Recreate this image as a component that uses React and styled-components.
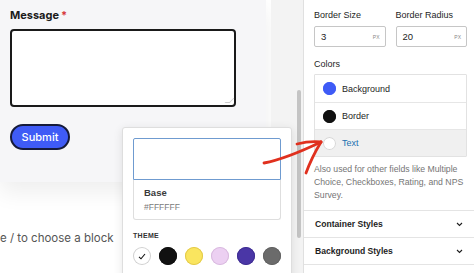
import React from "react";
import styled, { createGlobalStyle } from "styled-components";

const GlobalStyle = createGlobalStyle`
  html, body { margin: 0; padding: 0; background: #fff; }
  body { font-family: "Liberation Sans", Arial, sans-serif; }
  * { box-sizing: border-box; }
`;

const Page = styled.div`
  position: relative;
  width: 474px;
  height: 273px;
  overflow: hidden;
  display: flex;
  background: #fff;
`;

const Canvas = styled.div`
  width: 304px;
  flex: none;
  display: flex;
  border-right: 1px solid #e0e0e0;
`;

const CanvasMain = styled.div`
  width: 271px;
  display: flex;
  flex-direction: column;
  background: #fff;
`;

const FormCard = styled.div`
  width: 266px;
  height: 182px;
  background: #f6f6f8;
  padding: 8px 0 0 10px;
  display: flex;
  flex-direction: column;
  align-items: flex-start;
  box-shadow: 0 10px 22px rgba(0, 0, 0, 0.07);
  font-family: Inter, "Noto Sans", sans-serif;
`;

const FieldLabel = styled.div`
  font-size: 11px;
  font-weight: 700;
  color: #1b1b1b;
  line-height: 14px;
  margin-bottom: 7px;
`;

const Req = styled.span`
  color: #d63638;
  margin-left: 2px;
`;

const MessageBox = styled.div`
  position: relative;
  width: 226px;
  height: 78px;
  background: #fff;
  border: 2px solid #1a1a1a;
  border-radius: 4px;
  &::after {
    content: "";
    position: absolute;
    right: 2px;
    bottom: 2px;
    width: 4px;
    height: 4px;
    border-right: 1px solid #aaa;
    border-bottom: 1px solid #aaa;
    transform: skew(-45deg);
    opacity: 0.6;
  }
`;

const SubmitButton = styled.button`
  margin-top: 17px;
  width: 60px;
  height: 26px;
  background: #3f5bf6;
  color: #fff;
  border: 2px solid #151a3a;
  border-radius: 13px;
  font-family: Inter, "Noto Sans", sans-serif;
  font-size: 11px;
  font-weight: 500;
  padding: 0;
`;

const Hint = styled.div`
  margin-top: 49px;
  font-family: Inter, "Noto Sans", sans-serif;
  font-size: 11.5px;
  color: #555;
  white-space: nowrap;
`;

const ScrollTrack = styled.div`
  flex: 1;
  background: #f3f3f3;
  position: relative;
  display: flex;
  justify-content: flex-end;
  padding: 90px 2px 0 0;
`;

const Thumb = styled.div`
  width: 4px;
  height: 148px;
  border-radius: 2px;
  background: #c4c4c4;
`;

const Sidebar = styled.div`
  flex: 1;
  display: flex;
  flex-direction: column;
  font-family: "Liberation Sans", Arial, sans-serif;
  color: #1e1e1e;
`;

const SideSection = styled.div`
  padding: 9px 7px 0 10px;
`;

const SizeGrid = styled.div`
  display: grid;
  grid-template-columns: 1fr 1fr;
  column-gap: 10px;
`;

const SmallLabel = styled.div`
  font-size: 9px;
  line-height: 12px;
  margin-bottom: ${(p) => p.$mb || 5}px;
`;

const UnitInput = styled.div`
  height: 21px;
  border: 1px solid #c6c6c6;
  border-radius: 2px;
  display: flex;
  align-items: center;
  justify-content: space-between;
  padding: 0 5px 0 6px;
  font-size: 9.5px;
`;

const Unit = styled.span`
  font-size: 5px;
  color: #888;
`;

const ColorsLabel = styled(SmallLabel)`
  margin-top: 11px;
`;

const ColorList = styled.div`
  border: 1px solid #e2e2e2;
  border-radius: 1px;
`;

const ColorRow = styled.div`
  height: 27px;
  display: flex;
  align-items: center;
  padding-left: 8px;
  gap: 6px;
  font-size: 9px;
  background: ${(p) => (p.$active ? "#f0f0f0" : "#fff")};
  color: ${(p) => (p.$active ? "#2271b1" : "#1e1e1e")};
  & + & {
    border-top: 1px solid #e6e6e6;
  }
`;

const Dot = styled.span`
  width: 13px;
  height: 13px;
  border-radius: 50%;
  background: ${(p) => p.$c};
  box-shadow: inset 0 0 0 1px ${(p) => p.$b || "rgba(0,0,0,0.1)"};
`;

const HelpText = styled.p`
  margin: 6px 0 8px;
  font-size: 8.7px;
  line-height: 13px;
  color: #757575;
`;

const PanelRow = styled.div`
  height: ${(p) => p.$h || 31}px;
  border-top: 1px solid #e4e4e4;
  display: flex;
  align-items: center;
  justify-content: space-between;
  padding: 0 11px 0 11px;
  font-size: 8.6px;
  font-weight: 700;
  color: #1e1e1e;
`;

const Popover = styled.div`
  position: absolute;
  left: 122px;
  top: 127px;
  width: 170px;
  height: 160px;
  background: #fff;
  border: 1px solid #dedede;
  border-radius: 3px;
  box-shadow: 0 2px 10px rgba(0, 0, 0, 0.1);
  padding: 10px;
  font-family: "Liberation Sans", Arial, sans-serif;
`;

const Preview = styled.div`
  height: 42px;
  border: 1px solid #6f9bd0;
  border-radius: 2px 2px 0 0;
  background: #fff;
`;

const InfoBox = styled.div`
  height: 40px;
  border: 1px solid #dedede;
  border-top: none;
  border-radius: 0 0 3px 3px;
  padding: 7px 10px;
  display: flex;
  flex-direction: column;
  gap: 3px;
`;

const BaseName = styled.div`
  font-size: 9.5px;
  font-weight: 700;
  color: #3a3a3a;
  line-height: 12px;
`;

const BaseHex = styled.div`
  font-size: 8.5px;
  color: #7a7a7a;
  line-height: 11px;
`;

const ThemeLabel = styled.div`
  margin-top: 12px;
  font-size: 7px;
  font-weight: 700;
  letter-spacing: 0.3px;
  color: #333;
`;

const Swatches = styled.div`
  margin-top: 8px;
  display: flex;
  gap: 8px;
`;

const Swatch = styled.div`
  width: 18px;
  height: 18px;
  border-radius: 50%;
  background: ${(p) => p.$c};
  box-shadow: inset 0 0 0 1px ${(p) => p.$b};
  display: flex;
  align-items: center;
  justify-content: center;
`;

const ArrowSvg = styled.svg`
  position: absolute;
  left: 0;
  top: 0;
  pointer-events: none;
`;

const Chevron = () => (
  <svg width="7" height="5" viewBox="0 0 7 5">
    <path d="M1 1 L3.5 3.5 L6 1" fill="none" stroke="#1e1e1e" strokeWidth="1.1" />
  </svg>
);

const swatches = [
  { c: "#fff", b: "#d0d0d0", check: true },
  { c: "#111", b: "#111" },
  { c: "#fae55f", b: "#e2c94a" },
  { c: "#ecd0f2", b: "#d8b9de" },
  { c: "#4a36a6", b: "#3f2e92" },
  { c: "#6b6b6b", b: "#626262" },
];

export default function App() {
  return (
    <>
      <GlobalStyle />
      <Page>
        <Canvas>
          <CanvasMain>
            <FormCard>
              <FieldLabel>
                Message<Req>*</Req>
              </FieldLabel>
              <MessageBox />
              <SubmitButton>Submit</SubmitButton>
            </FormCard>
            <Hint>e / to choose a block</Hint>
          </CanvasMain>
          <ScrollTrack>
            <Thumb />
          </ScrollTrack>
        </Canvas>
        <Sidebar>
          <SideSection>
            <SizeGrid>
              <SmallLabel>Border Size</SmallLabel>
              <SmallLabel>Border Radius</SmallLabel>
              <UnitInput>
                3<Unit>PX</Unit>
              </UnitInput>
              <UnitInput>
                20<Unit>PX</Unit>
              </UnitInput>
            </SizeGrid>
            <ColorsLabel $mb={4}>Colors</ColorsLabel>
            <ColorList>
              <ColorRow>
                <Dot $c="#3f5bf6" $b="#3f5bf6" />
                Background
              </ColorRow>
              <ColorRow>
                <Dot $c="#111" $b="#111" />
                Border
              </ColorRow>
              <ColorRow $active>
                <Dot $c="#fff" $b="#d6d6d6" />
                Text
              </ColorRow>
            </ColorList>
            <HelpText>
              Also used for other fields like Multiple Choice, Checkboxes, Rating, and NPS Survey.
            </HelpText>
          </SideSection>
          <PanelRow $h={31}>
            Container Styles
            <Chevron />
          </PanelRow>
          <PanelRow $h={30}>
            Background Styles
            <Chevron />
          </PanelRow>
          <PanelRow $h={10} />
        </Sidebar>
        <Popover>
          <Preview />
          <InfoBox>
            <BaseName>Base</BaseName>
            <BaseHex>#FFFFFF</BaseHex>
          </InfoBox>
          <ThemeLabel>THEME</ThemeLabel>
          <Swatches>
            {swatches.map((s, i) => (
              <Swatch key={i} $c={s.c} $b={s.b}>
                {s.check && (
                  <svg width="8" height="7" viewBox="0 0 8 7">
                    <path d="M1 3.8 L3 5.8 L7 1" fill="none" stroke="#111" strokeWidth="1.1" />
                  </svg>
                )}
              </Swatch>
            ))}
          </Swatches>
        </Popover>
        <ArrowSvg width="474" height="273" viewBox="0 0 474 273">
          <g fill="none" stroke="#e0301e" strokeWidth="2.8" strokeLinecap="round" strokeLinejoin="round">
            <path d="M264 163 C 280 160, 298 153, 321 142" />
            <path d="M297 144 C 305 142, 313 141, 321 142" />
            <path d="M321 142 C 315 152, 310 162, 306 173" />
          </g>
        </ArrowSvg>
      </Page>
    </>
  );
}
